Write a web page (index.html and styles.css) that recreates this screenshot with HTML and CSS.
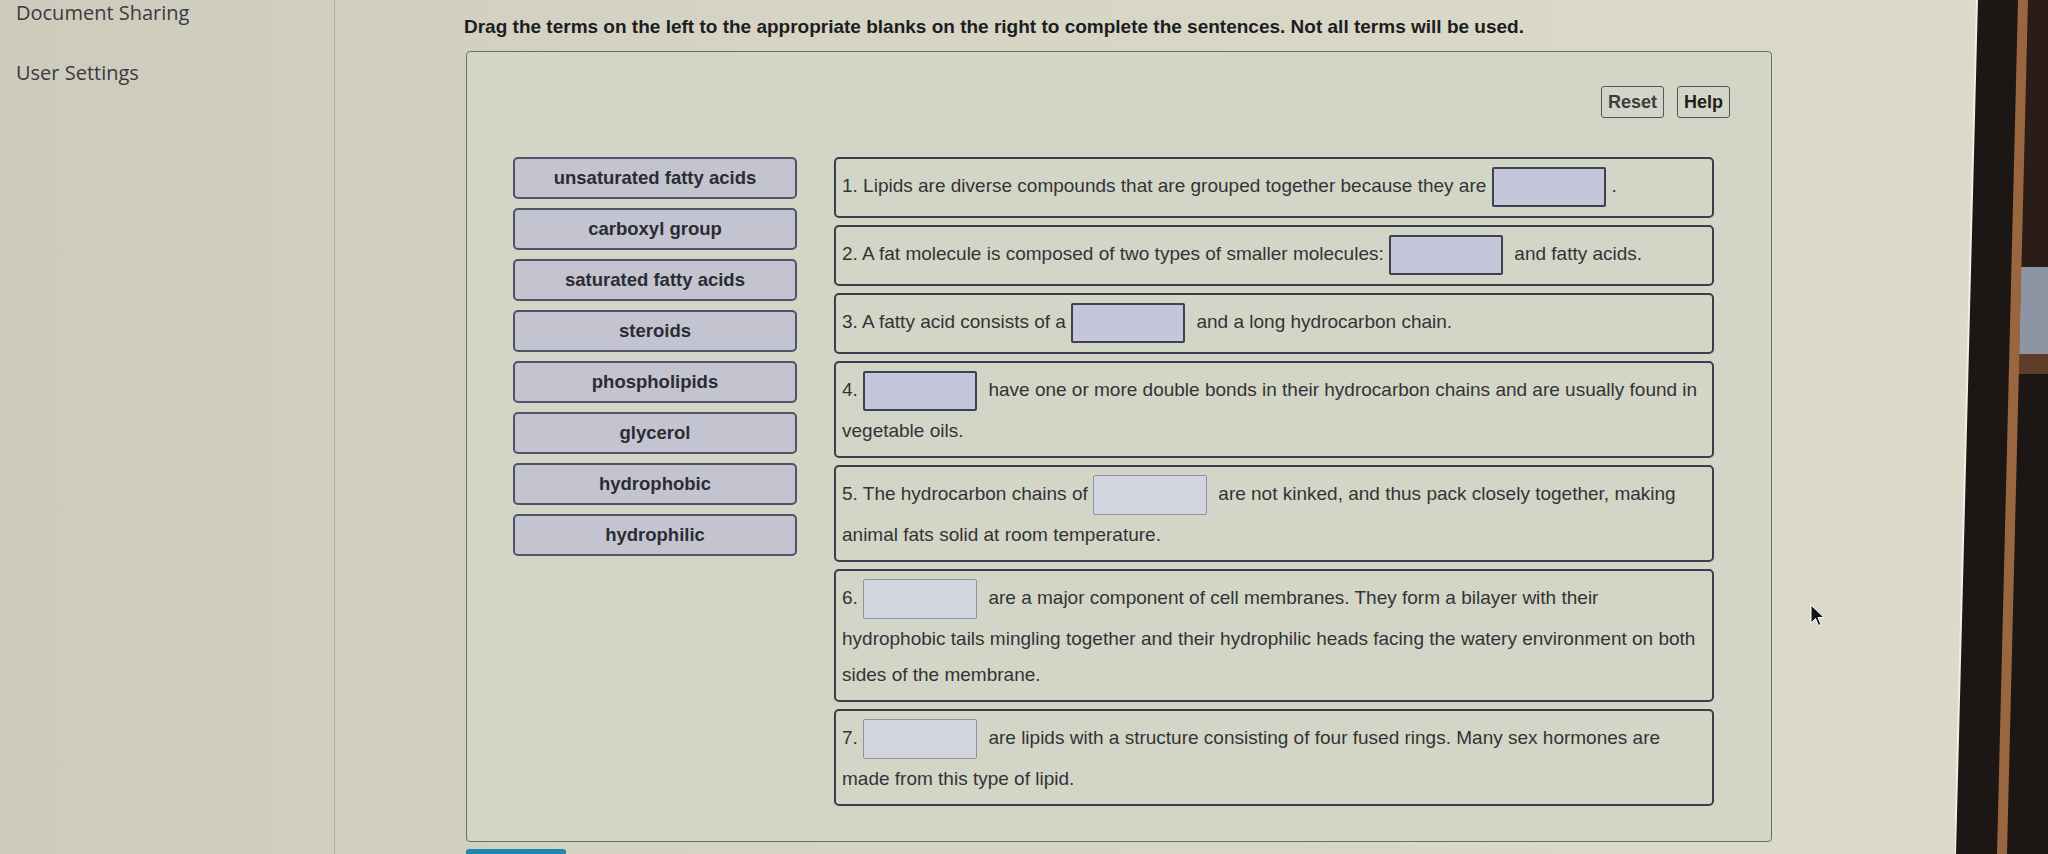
FILE: index.html
```html
<!DOCTYPE html>
<html lang="en">
<head>
<meta charset="utf-8">
<title>Lipids – Drag and Drop</title>
<link rel="stylesheet" href="styles.css">
</head>
<body>
<div class="screen">
  <aside class="sidebar">
    <a class="nav-item">Document Sharing</a>
    <a class="nav-item">User Settings</a>
  </aside>

  <main class="main">
    <p class="instructions">Drag the terms on the left to the appropriate blanks on the right to complete the sentences. Not all terms will be used.</p>

    <section class="panel">
      <div class="toolbar">
        <button class="btn btn-reset">Reset</button>
        <button class="btn">Help</button>
      </div>

      <div class="activity">
        <ul class="terms">
          <li class="term">unsaturated fatty acids</li>
          <li class="term">carboxyl group</li>
          <li class="term">saturated fatty acids</li>
          <li class="term">steroids</li>
          <li class="term">phospholipids</li>
          <li class="term">glycerol</li>
          <li class="term">hydrophobic</li>
          <li class="term">hydrophilic</li>
        </ul>

        <ol class="sentences">
          <li class="sentence">1. Lipids are diverse compounds that are grouped together because they are <span class="blank"></span>.</li>
          <li class="sentence">2. A fat molecule is composed of two types of smaller molecules: <span class="blank"></span> and fatty acids.</li>
          <li class="sentence">3. A fatty acid consists of a <span class="blank"></span> and a long hydrocarbon chain.</li>
          <li class="sentence">4. <span class="blank"></span> have one or more double bonds in their hydrocarbon chains and are usually found in vegetable oils.</li>
          <li class="sentence">5. The hydrocarbon chains of <span class="blank blank-light"></span> are not kinked, and thus pack closely together, making animal fats solid at room temperature.</li>
          <li class="sentence">6. <span class="blank blank-light"></span> are a major component of cell membranes. They form a bilayer with their hydrophobic tails mingling together and their hydrophilic heads facing the watery environment on both sides of the membrane.</li>
          <li class="sentence">7. <span class="blank blank-light"></span> are lipids with a structure consisting of four fused rings. Many sex hormones are made from this type of lipid.</li>
        </ol>
      </div>
    </section>

    <button class="submit">Submit</button>
  </main>

  <div class="bezel">
    <svg width="93" height="854" viewBox="0 0 93 854" xmlns="http://www.w3.org/2000/svg">
      <polygon points="22,0 93,0 93,854 0,854" fill="#1c1614"/>
      <polygon points="73,0 93,0 93,267 66,267" fill="#2a1c17"/>
      <polygon points="66,267 93,267 93,354 64,354" fill="#8d95a5"/>
      <polygon points="64,354 93,354 93,374 63,374" fill="#5e3d2a"/>
      <polygon points="63,0 73,0 52,854 42,854" fill="#9a6640"/>
      <line x1="22" y1="0" x2="0" y2="854" stroke="#f2efe6" stroke-width="2"/>
    </svg>
  </div>

  <svg class="cursor" width="16" height="24" viewBox="0 0 16 24" xmlns="http://www.w3.org/2000/svg">
    <path d="M1 1 L1 19 L5.5 14.5 L8.5 21.5 L11 20.5 L8 13.5 L14 13.5 Z" fill="#151515" stroke="#ffffff" stroke-width="1"/>
  </svg>
</div>
</body>
</html>
```

FILE: styles.css
```css
html, body {
  margin: 0;
  padding: 0;
  height: 854px;
  overflow: hidden;
}

body {
  background: #d5d3c4;
  font-family: "Liberation Sans", Arial, sans-serif;
}

.screen {
  position: relative;
  display: flex;
  height: 854px;
  background: linear-gradient(90deg, #cdcbbc 0%, #d4d3c4 35%, #d9d8c9 80%, #dcdacb 100%);
}

/* ---------- sidebar ---------- */
.sidebar {
  width: 335px;
  flex: none;
  box-sizing: border-box;
  border-right: 1px solid #b4b2a4;
  padding: 1px 16px 0;
}

.nav-item {
  display: block;
  font-family: "Open Sans", "Noto Sans", sans-serif;
  font-size: 20px;
  line-height: 24px;
  color: #3a3a42;
  margin-bottom: 36px;
}

/* ---------- main ---------- */
.main {
  flex: 1;
  min-width: 0;
  padding: 16px 0 0 131px;
}

.instructions {
  margin: 0 0 13px -2px;
  font-size: 19px;
  line-height: 22px;
  font-weight: bold;
  color: #1d1d1f;
}

.panel {
  width: 1306px;
  box-sizing: border-box;
  border: 1px solid #6e6e68;
  border-radius: 4px;
  background: #d3d6c6;
  padding: 34px 41px 35px 46px;
}

.toolbar {
  display: flex;
  justify-content: flex-end;
  gap: 13px;
}

.btn {
  height: 32px;
  padding: 0 6px;
  font-family: "Liberation Sans", Arial, sans-serif;
  font-size: 18px;
  font-weight: bold;
  color: #1f1f22;
  background: transparent;
  border: 1.5px solid #55555a;
  border-radius: 3px;
}

.btn-reset {
  color: #3e3e42;
}

.activity {
  display: flex;
  gap: 37px;
  margin-top: 39px;
  align-items: flex-start;
}

/* ---------- terms ---------- */
.terms {
  list-style: none;
  margin: 0;
  padding: 0;
  width: 284px;
  display: flex;
  flex-direction: column;
  gap: 9px;
}

.term {
  height: 42px;
  box-sizing: border-box;
  display: flex;
  align-items: center;
  justify-content: center;
  background: #c3c4cf;
  border: 2px solid #4f5369;
  border-radius: 5px;
  font-size: 18.5px;
  font-weight: bold;
  color: #2b2c34;
}

/* ---------- sentences ---------- */
.sentences {
  list-style: none;
  margin: 0;
  padding: 0;
  width: 880px;
  display: flex;
  flex-direction: column;
  gap: 7px;
}

.sentence {
  box-sizing: border-box;
  border: 2px solid #3a3d4a;
  border-radius: 5px;
  padding: 6px 12px 7px 6px;
  font-size: 19px;
  line-height: 36px;
  color: #333336;
}

.blank {
  display: inline-block;
  box-sizing: border-box;
  width: 114px;
  height: 40px;
  margin: 2px 6px 2px 0;
  vertical-align: middle;
  background: #c4c6da;
  border: 2px solid #3e4152;
  border-radius: 2px;
}

.blank-light {
  background: #d2d5dd;
  border: 1.5px solid #8b93a8;
}

/* ---------- submit ---------- */
.submit {
  display: block;
  margin-top: 7px;
  width: 100px;
  height: 40px;
  border: none;
  border-radius: 3px;
  background: #1f86b6;
  color: #ffffff;
  font-family: "Liberation Sans", Arial, sans-serif;
  font-size: 18px;
  font-weight: bold;
}

/* ---------- monitor bezel ---------- */
.bezel {
  width: 93px;
  flex: none;
  height: 854px;
}

.bezel svg {
  display: block;
}

/* ---------- mouse pointer ---------- */
.cursor {
  position: absolute;
  left: 1810px;
  top: 604px;
}
```
